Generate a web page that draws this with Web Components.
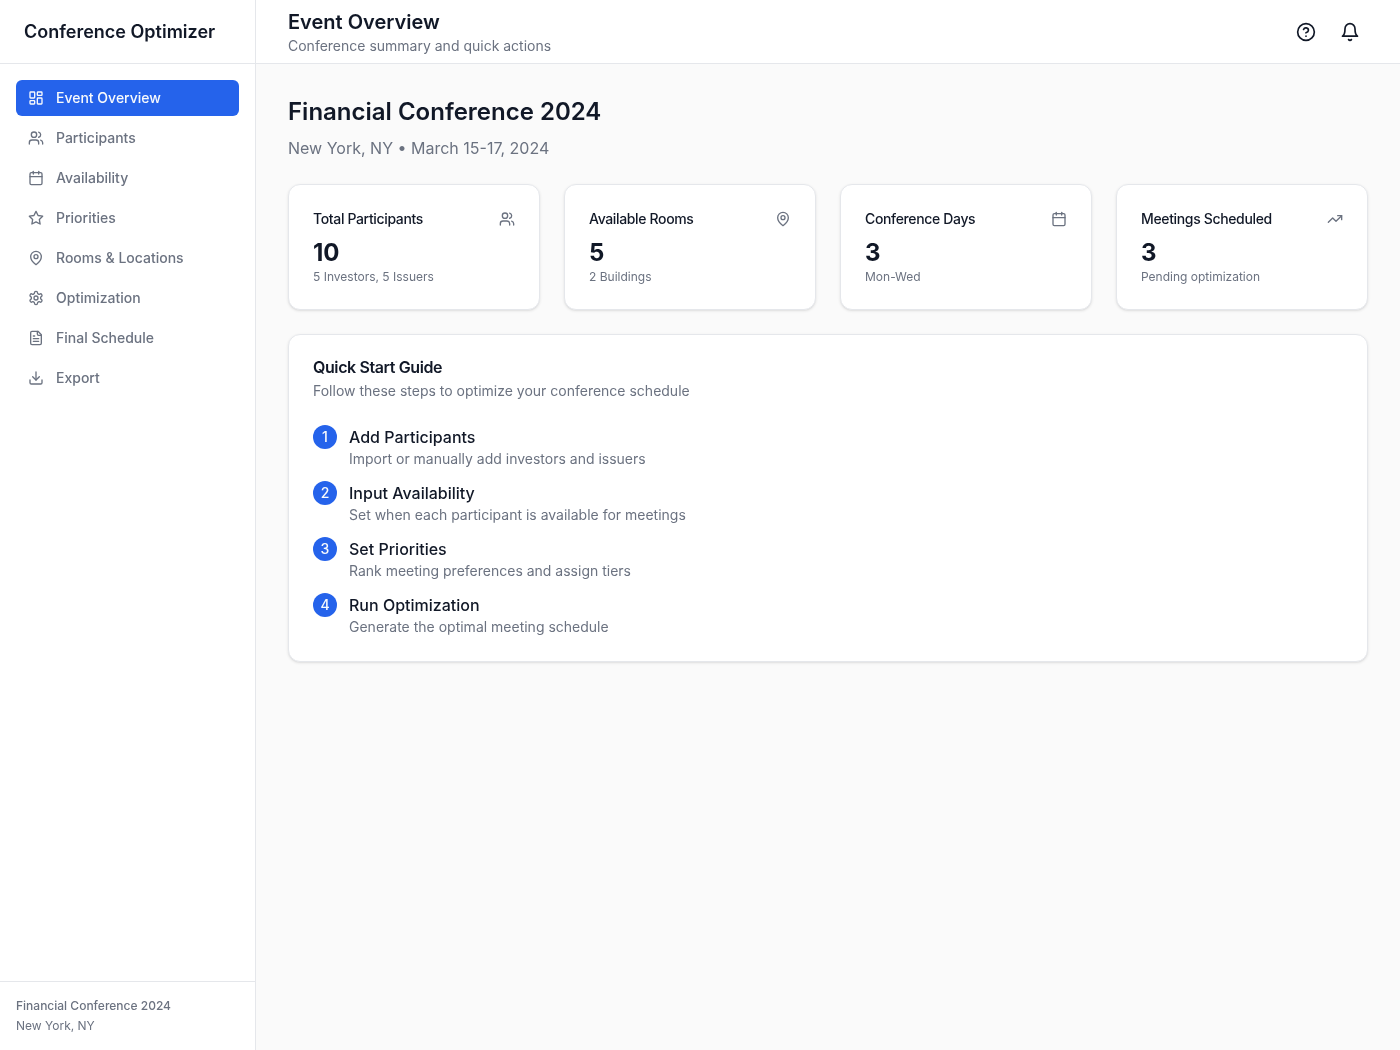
<!DOCTYPE html>
<html lang="en">
<head>
<meta charset="utf-8">
<title>Conference Optimizer</title>
<style>
  html, body { margin: 0; height: 100%; }
  body { font-family: Inter, "Liberation Sans", sans-serif; color: #111827; background: #fafafa; overflow: hidden; -webkit-font-smoothing: antialiased; }
</style>
</head>
<body>
<app-shell>
  <side-bar slot="side"></side-bar>
  <top-bar slot="top" heading="Event Overview" sub="Conference summary and quick actions"></top-bar>
  <h-block heading="Financial Conference 2024" sub="New York, NY • March 15-17, 2024"></h-block>
  <div style="display:grid;grid-template-columns:repeat(4,1fr);gap:24px;margin-bottom:24px">
    <stat-card label="Total Participants" value="10" note="5 Investors, 5 Issuers" icon="users"></stat-card>
    <stat-card label="Available Rooms" value="5" note="2 Buildings" icon="pin"></stat-card>
    <stat-card label="Conference Days" value="3" note="Mon-Wed" icon="calendar"></stat-card>
    <stat-card label="Meetings Scheduled" value="3" note="Pending optimization" icon="trending"></stat-card>
  </div>
  <guide-card heading="Quick Start Guide" sub="Follow these steps to optimize your conference schedule">
    <guide-step n="1" heading="Add Participants" sub="Import or manually add investors and issuers"></guide-step>
    <guide-step n="2" heading="Input Availability" sub="Set when each participant is available for meetings"></guide-step>
    <guide-step n="3" heading="Set Priorities" sub="Rank meeting preferences and assign tiers"></guide-step>
    <guide-step n="4" heading="Run Optimization" sub="Generate the optimal meeting schedule"></guide-step>
  </guide-card>
</app-shell>

<script>
// lucide-style outlines, all on a 24 grid
const ICONS = {
  dashboard: `<rect width="7" height="9" x="3" y="3" rx="1"/><rect width="7" height="5" x="14" y="3" rx="1"/><rect width="7" height="9" x="14" y="12" rx="1"/><rect width="7" height="5" x="3" y="16" rx="1"/>`,
  users: `<path d="M16 21v-2a4 4 0 0 0-4-4H6a4 4 0 0 0-4 4v2"/><circle cx="9" cy="7" r="4"/><path d="M22 21v-2a4 4 0 0 0-3-3.87"/><path d="M16 3.13a4 4 0 0 1 0 7.75"/>`,
  calendar: `<path d="M8 2v4"/><path d="M16 2v4"/><rect width="18" height="18" x="3" y="4" rx="2"/><path d="M3 10h18"/>`,
  star: `<polygon points="12 2 15.09 8.26 22 9.27 17 14.14 18.18 21.02 12 17.77 5.82 21.02 7 14.14 2 9.27 8.91 8.26 12 2"/>`,
  pin: `<path d="M20 10c0 6-8 12-8 12s-8-6-8-12a8 8 0 0 1 16 0Z"/><circle cx="12" cy="10" r="3"/>`,
  settings: `<path d="M12.22 2h-.44a2 2 0 0 0-2 2v.18a2 2 0 0 1-1 1.73l-.43.25a2 2 0 0 1-2 0l-.15-.08a2 2 0 0 0-2.73.73l-.22.38a2 2 0 0 0 .73 2.73l.15.1a2 2 0 0 1 1 1.72v.51a2 2 0 0 1-1 1.74l-.15.09a2 2 0 0 0-.73 2.73l.22.38a2 2 0 0 0 2.73.73l.15-.08a2 2 0 0 1 2 0l.43.25a2 2 0 0 1 1 1.73V20a2 2 0 0 0 2 2h.44a2 2 0 0 0 2-2v-.18a2 2 0 0 1 1-1.73l.43-.25a2 2 0 0 1 2 0l.15.08a2 2 0 0 0 2.73-.73l.22-.39a2 2 0 0 0-.73-2.73l-.15-.08a2 2 0 0 1-1-1.74v-.5a2 2 0 0 1 1-1.74l.15-.09a2 2 0 0 0 .73-2.73l-.22-.38a2 2 0 0 0-2.73-.73l-.15.08a2 2 0 0 1-2 0l-.43-.25a2 2 0 0 1-1-1.73V4a2 2 0 0 0-2-2z"/><circle cx="12" cy="12" r="3"/>`,
  file: `<path d="M15 2H6a2 2 0 0 0-2 2v16a2 2 0 0 0 2 2h12a2 2 0 0 0 2-2V7Z"/><path d="M14 2v4a2 2 0 0 0 2 2h4"/><path d="M10 9H8"/><path d="M16 13H8"/><path d="M16 17H8"/>`,
  download: `<path d="M21 15v4a2 2 0 0 1-2 2H5a2 2 0 0 1-2-2v-4"/><polyline points="7 10 12 15 17 10"/><line x1="12" x2="12" y1="15" y2="3"/>`,
  help: `<circle cx="12" cy="12" r="10"/><path d="M9.09 9a3 3 0 0 1 5.83 1c0 2-3 3-3 3"/><path d="M12 17h.01"/>`,
  bell: `<path d="M6 8a6 6 0 0 1 12 0c0 7 3 9 3 9H3s3-2 3-9"/><path d="M10.3 21a1.94 1.94 0 0 0 3.4 0"/>`,
  trending: `<polyline points="22 7 13.5 15.5 8.5 10.5 2 17"/><polyline points="16 7 22 7 22 13"/>`,
};

const svg = (name, size = 16) =>
  `<svg xmlns="http://www.w3.org/2000/svg" width="${size}" height="${size}" viewBox="0 0 24 24" fill="none" stroke="currentColor" stroke-width="2" stroke-linecap="round" stroke-linejoin="round" style="display:block;flex:none">${ICONS[name]}</svg>`;

// small base so each element only has to supply css + html
class ShadowEl extends HTMLElement {
  constructor() {
    super();
    this.attachShadow({ mode: "open" });
  }
  connectedCallback() {
    this.shadowRoot.innerHTML = `<style>${this.css()}</style>${this.html()}`;
  }
  attr(name) {
    return this.getAttribute(name) ?? "";
  }
}

class AppShell extends ShadowEl {
  css() {
    return `
      :host { display: flex; height: 100vh; will-change: transform; }
      .col { flex: 1; min-width: 0; display: flex; flex-direction: column; }
      main { padding: 32px; }
    `;
  }
  html() {
    return `<slot name="side"></slot>
      <div class="col"><slot name="top"></slot><main><slot></slot></main></div>`;
  }
}

class SideBar extends ShadowEl {
  css() {
    return `
      :host { display: flex; flex-direction: column; width: 256px; flex: none; box-sizing: border-box; background: #fff; border-right: 1px solid #e5e7eb; }
      .brand { height: 64px; box-sizing: border-box; padding: 0 24px; display: flex; align-items: center; border-bottom: 1px solid #e5e7eb; font-size: 18px; font-weight: 600; line-height: 28px; color: #111827; }
      nav { flex: 1; padding: 16px; display: flex; flex-direction: column; gap: 4px; }
      .foot { border-top: 1px solid #e5e7eb; padding: 16px; font-size: 12px; line-height: 16px; color: #6b7280; }
      .foot div:first-child { font-weight: 500; margin-bottom: 4px; }
    `;
  }
  html() {
    return `<div class="brand">Conference Optimizer</div>
      <nav>
        <nav-item icon="dashboard" label="Event Overview" active></nav-item>
        <nav-item icon="users" label="Participants"></nav-item>
        <nav-item icon="calendar" label="Availability"></nav-item>
        <nav-item icon="star" label="Priorities"></nav-item>
        <nav-item icon="pin" label="Rooms &amp; Locations"></nav-item>
        <nav-item icon="settings" label="Optimization"></nav-item>
        <nav-item icon="file" label="Final Schedule"></nav-item>
        <nav-item icon="download" label="Export"></nav-item>
      </nav>
      <div class="foot"><div>Financial Conference 2024</div><div>New York, NY</div></div>`;
  }
}

class NavItem extends ShadowEl {
  css() {
    return `
      :host { display: flex; align-items: center; gap: 12px; height: 36px; padding: 0 12px; border-radius: 6px; font-size: 14px; font-weight: 500; line-height: 20px; color: #6b7280; }
      :host([active]) { background: #2563eb; color: #f8fafc; }
    `;
  }
  html() {
    return `${svg(this.attr("icon"))}<span>${this.attr("label")}</span>`;
  }
}

class TopBar extends ShadowEl {
  css() {
    return `
      :host { display: flex; align-items: center; justify-content: space-between; height: 64px; box-sizing: border-box; padding: 0 32px; background: #fff; border-bottom: 1px solid #e5e7eb; }
      h2 { margin: 0; font-size: 20px; line-height: 28px; font-weight: 600; color: #111827; }
      p { margin: 0; font-size: 14px; line-height: 20px; color: #6b7280; }
      .btns { display: flex; gap: 8px; }
      .btn { width: 36px; height: 36px; display: flex; align-items: center; justify-content: center; color: #111827; }
    `;
  }
  html() {
    return `<div><h2>${this.attr("heading")}</h2><p>${this.attr("sub")}</p></div>
      <div class="btns"><span class="btn">${svg("help", 20)}</span><span class="btn">${svg("bell", 20)}</span></div>`;
  }
}

class HBlock extends ShadowEl {
  css() {
    return `
      :host { display: block; margin-bottom: 24px; }
      h1 { margin: 0 0 8px; font-size: 24px; line-height: 32px; font-weight: 600; color: #111827; }
      p { margin: 0; font-size: 16px; line-height: 24px; color: #6b7280; }
    `;
  }
  html() {
    return `<h1>${this.attr("heading")}</h1><p>${this.attr("sub")}</p>`;
  }
}

class StatCard extends ShadowEl {
  css() {
    return `
      :host { display: block; box-sizing: border-box; height: 126px; padding: 24px; background: #fff; border: 1px solid #e5e7eb; border-radius: 12px; box-shadow: 0 1px 3px rgba(0,0,0,.1), 0 1px 2px -1px rgba(0,0,0,.1); }
      .head { display: flex; align-items: center; justify-content: space-between; height: 20px; margin-bottom: 8px; }
      .label { font-size: 14px; line-height: 20px; font-weight: 500; letter-spacing: -0.35px; color: #111827; }
      .icon { color: #6b7280; }
      .value { font-size: 24px; line-height: 32px; font-weight: 700; color: #111827; }
      .note { font-size: 12px; line-height: 16px; color: #6b7280; }
    `;
  }
  html() {
    return `<div class="head"><span class="label">${this.attr("label")}</span><span class="icon">${svg(this.attr("icon"))}</span></div>
      <div class="value">${this.attr("value")}</div>
      <div class="note">${this.attr("note")}</div>`;
  }
}

class GuideCard extends ShadowEl {
  css() {
    return `
      :host { display: block; box-sizing: border-box; padding: 24px; background: #fff; border: 1px solid #e5e7eb; border-radius: 12px; box-shadow: 0 1px 3px rgba(0,0,0,.1), 0 1px 2px -1px rgba(0,0,0,.1); }
      h3 { margin: 0; font-size: 16px; line-height: 16px; font-weight: 600; letter-spacing: -0.4px; color: #111827; }
      p { margin: 6px 0 0; font-size: 14px; line-height: 20px; color: #6b7280; }
      .steps { margin-top: 24px; display: flex; flex-direction: column; gap: 12px; }
    `;
  }
  html() {
    return `<h3>${this.attr("heading")}</h3><p>${this.attr("sub")}</p><div class="steps"><slot></slot></div>`;
  }
}

class GuideStep extends ShadowEl {
  css() {
    return `
      :host { display: flex; gap: 12px; align-items: flex-start; }
      .num { width: 24px; height: 24px; flex: none; border-radius: 50%; background: #2563eb; color: #f8fafc; font-size: 14px; font-weight: 500; line-height: 24px; text-align: center; }
      .title { font-size: 16px; line-height: 24px; font-weight: 500; color: #111827; }
      .sub { font-size: 14px; line-height: 20px; color: #6b7280; }
    `;
  }
  html() {
    return `<div class="num">${this.attr("n")}</div>
      <div><div class="title">${this.attr("heading")}</div><div class="sub">${this.attr("sub")}</div></div>`;
  }
}

customElements.define("app-shell", AppShell);
customElements.define("side-bar", SideBar);
customElements.define("nav-item", NavItem);
customElements.define("top-bar", TopBar);
customElements.define("h-block", HBlock);
customElements.define("stat-card", StatCard);
customElements.define("guide-card", GuideCard);
customElements.define("guide-step", GuideStep);
</script>
</body>
</html>
